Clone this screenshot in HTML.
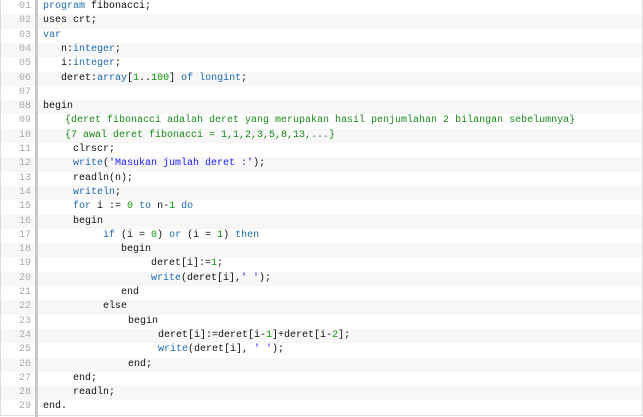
<!DOCTYPE html>
<html><head><style>
body{margin:0;width:643px;height:417px;overflow:hidden;background:#fff}
.w{position:absolute;left:0;top:0;width:641px;height:415px;border:1px solid #ddd;border-top:none}
.r{position:absolute;left:0;width:641px;height:14.3px;line-height:14.3px;white-space:pre;color:#111;font-family:"Liberation Mono","DejaVu Sans Mono",monospace;font-size:10px}
.r:nth-child(even){background:#f7f7f7}
.n{position:absolute;left:0;width:30px;text-align:right;color:#aaa}
.c{position:absolute}
.g{position:absolute;left:34px;top:0;width:3px;height:417px;background:#c8c8c8}
.k{color:#1f6ab0}.s{color:#1a1aff}.m{color:#0a9a0a}.cm{color:#1a8a1a}
</style></head><body><div class="w">
<div class="r" style="top:0"><span class="n">01</span><span class="c" style="left:42px"><span class="k">program</span> fibonacci;</span></div>
<div class="r" style="top:14.3px"><span class="n">02</span><span class="c" style="left:42px">uses crt;</span></div>
<div class="r" style="top:28.6px"><span class="n">03</span><span class="c" style="left:42px"><span class="k">var</span></span></div>
<div class="r" style="top:42.9px"><span class="n">04</span><span class="c" style="left:60px">n:<span class="k">integer</span>;</span></div>
<div class="r" style="top:57.2px"><span class="n">05</span><span class="c" style="left:60px">i:<span class="k">integer</span>;</span></div>
<div class="r" style="top:71.5px"><span class="n">06</span><span class="c" style="left:60px">deret:<span class="k">array</span>[<span class="m">1</span>..<span class="m">100</span>] <span class="k">of</span> <span class="k">longint</span>;</span></div>
<div class="r" style="top:85.8px"><span class="n">07</span></div>
<div class="r" style="top:100.1px"><span class="n">08</span><span class="c" style="left:42px">begin</span></div>
<div class="r" style="top:114.4px"><span class="n">09</span><span class="c cm" style="left:64px">{deret fibonacci adalah deret yang merupakan hasil penjumlahan 2 bilangan sebelumnya}</span></div>
<div class="r" style="top:128.7px"><span class="n">10</span><span class="c cm" style="left:64px">{7 awal deret fibonacci = 1,1,2,3,5,8,13,...}</span></div>
<div class="r" style="top:143px"><span class="n">11</span><span class="c" style="left:72px">clrscr;</span></div>
<div class="r" style="top:157.3px"><span class="n">12</span><span class="c" style="left:72px"><span class="k">write</span>(<span class="s">'Masukan jumlah deret :'</span>);</span></div>
<div class="r" style="top:171.6px"><span class="n">13</span><span class="c" style="left:72px">readln(n);</span></div>
<div class="r" style="top:185.9px"><span class="n">14</span><span class="c" style="left:72px"><span class="k">writeln</span>;</span></div>
<div class="r" style="top:200.2px"><span class="n">15</span><span class="c" style="left:72px"><span class="k">for</span> i := <span class="m">0</span> <span class="k">to</span> n-<span class="m">1</span> <span class="k">do</span></span></div>
<div class="r" style="top:214.5px"><span class="n">16</span><span class="c" style="left:72px">begin</span></div>
<div class="r" style="top:228.8px"><span class="n">17</span><span class="c" style="left:102px"><span class="k">if</span> (i = <span class="m">0</span>) <span class="k">or</span> (i = <span class="m">1</span>) <span class="k">then</span></span></div>
<div class="r" style="top:243.1px"><span class="n">18</span><span class="c" style="left:120px">begin</span></div>
<div class="r" style="top:257.4px"><span class="n">19</span><span class="c" style="left:150px">deret[i]:=<span class="m">1</span>;</span></div>
<div class="r" style="top:271.7px"><span class="n">20</span><span class="c" style="left:150px"><span class="k">write</span>(deret[i],<span class="s">' '</span>);</span></div>
<div class="r" style="top:286px"><span class="n">21</span><span class="c" style="left:120px">end</span></div>
<div class="r" style="top:300.3px"><span class="n">22</span><span class="c" style="left:102px">else</span></div>
<div class="r" style="top:314.6px"><span class="n">23</span><span class="c" style="left:127px">begin</span></div>
<div class="r" style="top:328.9px"><span class="n">24</span><span class="c" style="left:157px">deret[i]:=deret[i-<span class="m">1</span>]+deret[i-<span class="m">2</span>];</span></div>
<div class="r" style="top:343.2px"><span class="n">25</span><span class="c" style="left:157px"><span class="k">write</span>(deret[i], <span class="s">' '</span>);</span></div>
<div class="r" style="top:357.5px"><span class="n">26</span><span class="c" style="left:127px">end;</span></div>
<div class="r" style="top:371.8px"><span class="n">27</span><span class="c" style="left:72px">end;</span></div>
<div class="r" style="top:386.1px"><span class="n">28</span><span class="c" style="left:72px">readln;</span></div>
<div class="r" style="top:400.4px"><span class="n">29</span><span class="c" style="left:42px">end.</span></div>
<div class="g"></div>
</div></body></html>
